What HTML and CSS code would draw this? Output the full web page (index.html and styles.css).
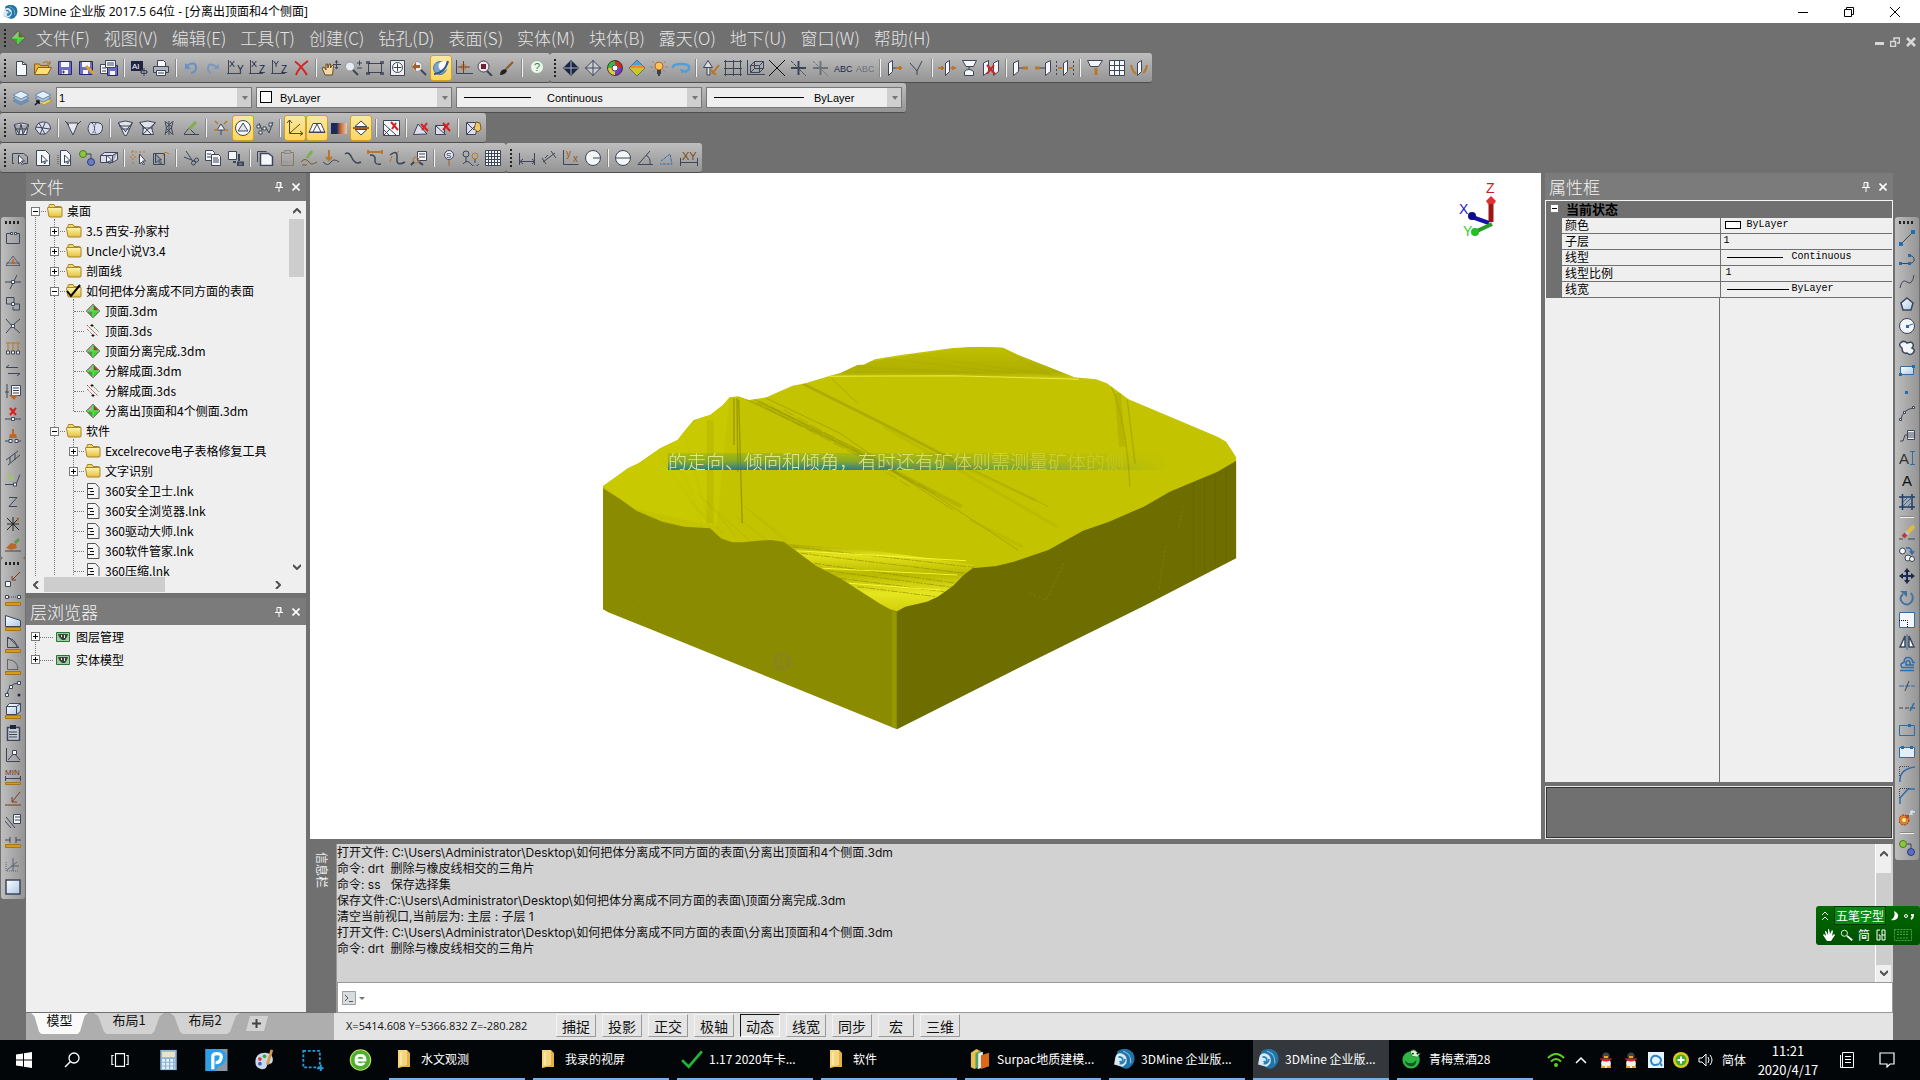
FILE: index.html
```html
<!DOCTYPE html>
<html lang="zh-CN">
<head>
  <meta charset="UTF-8">
  <meta name="viewport" content="width=device-width, initial-scale=1.0">
  <title>3DMine 企业版 2017.5 64位</title>
  <link rel="stylesheet" href="styles.css">
</head>
<body>
  <!-- shared symbols -->
  <svg class="defs">
    <linearGradient id="gold" x1="0" y1="0" x2="0" y2="1"><stop offset="0" stop-color="#fff6b0"/><stop offset="1" stop-color="#e5bf3c"/></linearGradient>
    <linearGradient id="sky" x1="0" y1="0" x2="1" y2="1"><stop offset="0" stop-color="#fff"/><stop offset="1" stop-color="#a9c8e8"/></linearGradient>
    <linearGradient id="heat"><stop offset="0" stop-color="#17285c"/><stop offset=".35" stop-color="#1a2a5a"/><stop offset=".6" stop-color="#c2683a"/><stop offset="1" stop-color="#efc9a8"/></linearGradient>
    <symbol id="folder" viewBox="0 0 16 14"><path d="M2 3.5V1.5q0-1 1-1h4l1 2h5.500q1 0 1 1v1" fill="#f3d86a" stroke="#a8842a"/><path d="M.5 4q0-.5.500-.5h11.500l2.500 0v8.500q0 1-1 1H3q-1 0-1.200-1z" fill="url(#gold)" stroke="#a8842a"/></symbol>
    <symbol id="dm" viewBox="0 0 14 14"><path d="M7 0l7 7-7 7-7-7z" fill="#8b6d5d" stroke="#555" stroke-width=".5"/><path d="M7 1v6H1z" fill="#a9b5a4"/><path d="M7 13V7h6z" fill="#3fd43a"/><path d="M7 1v6h6z" fill="#8b4a2e"/><path d="M7 13V7H1z" fill="#4f9a3f"/><path d="M7 1v12M1 7h12" stroke="#4be63f" stroke-width="1.500"/></symbol>
    <symbol id="ds" viewBox="0 0 14 14"><path d="M1 1l11 11" stroke="#c33" stroke-dasharray="2 1"/><path d="M1 5l7 7" stroke="#555" stroke-dasharray="1 1"/><path d="M6 1l7 7" stroke="#3a3" stroke-dasharray="2 1"/><path d="M6 0v3M4.500 1.500h3M7 10v3M5.500 11.500h3" stroke="#111"/></symbol>
    <symbol id="lnk" viewBox="0 0 14 16"><path d="M1.500 15.500V.5h8l3.500 4v11z" fill="#f4f4f4" stroke="#555"/><path d="M2 5.500h5M4 8.500h4M2 11.500h6" stroke="#111"/></symbol>
    <symbol id="eye" viewBox="0 0 14 10"><path d="M.5.5h13v9H.5z" fill="#a9c7a9" stroke="#1e7a2a"/><path d="M2 2h10l-1 3-2 3H6L3 5z" fill="#3a443a"/><path d="M5 3h1v2H5zM8 3h1v3H8z" fill="#dfe9df"/></symbol>
    <symbol id="pin" viewBox="0 0 8 10"><path d="M2 .5h4v5H2zM0 5.500h8M4 6v4M5.200 1v4" fill="none" stroke="#fff"/></symbol>
    <symbol id="x" viewBox="0 0 8 8"><path d="M.5.5l7 7M7.500.5l-7 7" stroke="#fff" stroke-width="1.600"/></symbol>
    <symbol id="logo" viewBox="0 0 20 18"><path d="M4 2q8-5 14 1 4 7-2 13-3 3-7 1l-7-3z" fill="#2274a8"/><path d="M2 8q1-5 6-4 6 2 4 9l-3 3-8-2z" fill="#d6ebf6"/><path d="M5 7q4 0 4 3-1 3-3 1M6 13q4 1 5-4" fill="none" stroke="#2b7fb4" stroke-width="1.500"/><path d="M9 2q8 2 7 11" fill="none" stroke="#82bddd"/></symbol>
    <symbol id="tfolder" viewBox="0 0 14 20"><path d="M1 1h9v16l-9 2z" fill="#f7d57a"/><path d="M10 1l3 3v14H1l9-2z" fill="#e3b04a"/><path d="M4 3v13" stroke="#fbe7a8" stroke-width="2"/></symbol>
    <symbol id="ql" viewBox="0 0 14 16"><circle cx="7" cy="4" r="3.600" fill="#444"/><path d="M3 16q-3-9 4-9 7 0 4 9z" fill="#f2f2f2"/><path d="M2 8q5 3 10 0l1-2q-6 2-12 0z" fill="#d3202a"/><path d="M2 15h4M8 15h4M5 5h4" stroke="#f0a01e" stroke-width="2"/></symbol>
  </svg>

  <header class="titlebar">
    <svg class="logo"><use href="#logo"/></svg>
    <h1>3DMine 企业版 2017.5 64位 - [分离出顶面和4个侧面]</h1>
    <div class="winbtns">
      <button aria-label="Minimize"><svg viewBox="0 0 12 12"><path d="M1 6.500h10"/></svg></button>
      <button aria-label="Restore"><svg viewBox="0 0 12 12"><path d="M1.500 3.500h7v7h-7zM3.500 3V1.500h7v7H9"/></svg></button>
      <button aria-label="Close"><svg viewBox="0 0 12 12"><path d="M1 1l10 10M11 1L1 11"/></svg></button>
    </div>
  </header>

  <nav class="menubar">
    <i class="grip"></i>
    <svg class="doc"><use href="#dm"/></svg>
    <a href="#">文件(F)</a><a href="#">视图(V)</a><a href="#">编辑(E)</a><a href="#">工具(T)</a><a href="#">创建(C)</a><a href="#">钻孔(D)</a><a href="#">表面(S)</a><a href="#">实体(M)</a><a href="#">块体(B)</a><a href="#">露天(O)</a><a href="#">地下(U)</a><a href="#">窗口(W)</a><a href="#">帮助(H)</a>
    <div class="mdibtns">
      <button aria-label="Minimize"><svg viewBox="0 0 10 10"><path d="M1 6.500h9" stroke-width="3"/></svg></button>
      <button aria-label="Restore"><svg viewBox="0 0 10 10"><path d="M.5 4.500h5v5h-5zM4 3.500V1h5.500v5H7" stroke-width="1.500"/></svg></button>
      <button aria-label="Close"><svg viewBox="0 0 10 10"><path d="M1 1l8 8M9 1L1 9" stroke-width="2.500"/></svg></button>
    </div>
  </nav>

  <section class="toolbars">
    <div class="row">
      <div class="bar">
        <i class="grip"></i>
        <button><svg viewBox="0 0 20 16"><path class="w" d="M5.500 1.500h6l4 3v11h-10z"/><path d="M11.500 1.500v3h4"/></svg></button>
        <button><svg viewBox="0 0 20 16"><path fill="#e8b23a" stroke="#8a5f14" d="M1.500 14V4h5l1 1.500h8V8"/><path fill="#ffdf7a" stroke="#8a5f14" d="M1.500 14.500L5 7.500h13.500l-4 7z"/><path stroke="#b06a10" d="M10 3q4-3 7 1m0-3v3h-3"/></svg></button>
        <button><svg viewBox="0 0 20 16"><path fill="#6e6ec0" stroke="#26266e" d="M3.500 1.500h13v13h-13z"/><path class="w" stroke="none" d="M6 2h8v5H6z"/><path class="w" stroke="none" d="M7 10h6v4H7z"/><path fill="#26266e" d="M8 11h1v2H8z"/></svg></button>
        <button><svg viewBox="0 0 20 16"><path fill="#6e6ec0" stroke="#26266e" d="M2.500 1.500h13v13h-13z"/><path class="w" stroke="none" d="M5 2h8v5H5z"/><path class="w" stroke="none" d="M6 10h5v4H6z"/><path stroke="#dca030" stroke-width="3" d="M9 6l8 8"/></svg></button>
        <button><svg viewBox="0 0 20 16"><path class="w" d="M1.500 4.500h8v9h-8z"/><path fill="#6e6ec0" stroke="#26266e" d="M8.500 5.500h10v10h-10z"/><path class="w" d="M6.500.5h10v7h-10z"/><path d="M8 3h7M8 5h7M3 8h4M3 11h4"/><path class="w" stroke="none" d="M11 11h5v4h-5z"/></svg></button>
        <i class="sep"></i>
        <button><svg viewBox="0 0 20 16"><path class="fd" d="M2 1h12v10H2z"/><text x="3" y="9" class="t" fill="#fff" font-size="8">AI</text><path class="w" d="M11 12h8M15 8v8M12.500 10.500h5v3h-5z"/></svg></button>
        <button><svg viewBox="0 0 20 16"><path class="w" d="M6.500.5h6l2 2v4h-8z"/><path fill="#aeb4c2" d="M2.500 6.500h15v6h-15z"/><path class="w" d="M5.500 10.500h9v5h-9z"/><path d="M7 13h6"/></svg></button>
        <i class="sep"></i>
        <button><svg viewBox="0 0 20 16"><path stroke="#6b8fc4" stroke-width="2" d="M5 6q10-6 10 2 0 4-5 5"/><path fill="#6b8fc4" stroke="none" d="M4 3v6h6z"/></svg></button>
        <button><svg viewBox="0 0 20 16"><path stroke="#7d98bd" stroke-width="2" d="M14 7q-9-6-9 2 0 3 3 4"/><path fill="#7d98bd" stroke="none" d="M16 4v5h-6z"/></svg></button>
        <button><svg viewBox="0 0 20 16"><path d="M3.500 0v13.500M2 13.500h14"/><text class="t" x="4" y="7" font-size="9">X</text><text class="t" x="12" y="13" font-size="10">Y</text></svg></button>
        <button><svg viewBox="0 0 20 16"><path d="M3.500 0v13.500M2 13.500h14"/><text class="t" x="4" y="7" font-size="9">X</text><text class="t" x="12" y="13" font-size="10">Z</text></svg></button>
        <button><svg viewBox="0 0 20 16"><path d="M3.500 0v13.500M2 13.500h14"/><text class="t" x="4" y="7" font-size="9">Y</text><text class="t" x="12" y="13" font-size="10">Z</text></svg></button>
        <button><svg viewBox="0 0 20 16"><path class="r" d="M4 1.500q6 4 12 13.500M17 1Q8 7 5 15"/></svg></button>
        <i class="sep"></i>
        <button><svg viewBox="0 0 20 16"><path fill="#f0d9a6" stroke="#6b4a1c" d="M4 15l-3-7 2-1 2 3V4l1.500 0 .5 4 1-4h1.500v4l2-3 1 1-1 9z"/><path d="M15.500 1v8M12 4.500h8M14 2.500l1.500-2 1.500 2M14 7l1.500 2L17 7"/></svg></button>
        <button><svg viewBox="0 0 20 16"><circle cx="7" cy="6.500" r="4.500" fill="#e6ecf2" stroke="#999"/><path d="M10 10l5 5" stroke-width="2"/><path d="M14 3h5M16.500.5v5M14 8h5"/></svg></button>
        <button><svg viewBox="0 0 20 16"><path d="M3.500 3.500h13v9h-13z"/><path class="fd" d="M1 1h4v3H1zM15 1h4v3h-4zM1 12h4v3H1zM15 12h4v3h-4z" opacity=".6"/></svg></button>
        <button><svg viewBox="0 0 20 16"><path fill="#eee" d="M3.500.5h14v15h-14z"/><circle cx="10.500" cy="7.500" r="5" fill="#fff"/><path d="M10.500 3.500v8M6.500 7.500h8"/></svg></button>
        <button><svg viewBox="0 0 20 16"><circle cx="8" cy="6.500" r="5" fill="#e8ecf2" stroke="#999"/><path fill="#a0602a" stroke="none" d="M3 7l4-5v3h4v3H7v3z"/><path d="M12 10l5 5" stroke-width="2"/></svg></button>
        <button class="on"><svg viewBox="0 0 20 16"><circle cx="9" cy="8" r="6.500" fill="#7fa3cf" stroke="#54749e"/><circle cx="12" cy="6" r="4.500" fill="#fff" stroke="none"/><path stroke="#31588c" stroke-width="2" d="M3 14Q14 13 17 1"/></svg></button>
        <button><svg viewBox="0 0 20 16"><path d="M3.500 0v13.500H20"/><circle cx="10.500" cy="7" r="2.500" class="o"/><path stroke="#8b3a1a" d="M10.500 1v12M5 7h12"/></svg></button>
        <button><svg viewBox="0 0 20 16"><circle cx="8.500" cy="6.500" r="5.500" fill="#f2e4e8"/><path fill="#6b2434" stroke="none" d="M6 4h5v5H6z"/><path d="M12 11l5 5" stroke-width="2"/></svg></button>
        <button><svg viewBox="0 0 20 16"><path fill="#222" stroke="none" d="M3 15q0-6 6-6l1 2q-2 4-7 4z"/><path stroke="#8b5c2c" stroke-width="2" d="M9 9l7-7"/></svg></button>
        <i class="sep"></i>
        <button><svg viewBox="0 0 20 16"><circle cx="10" cy="7" r="6.500" fill="#eef5ee" stroke="#9ab09a"/><text x="7" y="11" font-size="11" class="t" fill="#2b8a3a">?</text></svg></button>
      </div>
      <div class="bar">
        <i class="grip"></i>
        <button><svg viewBox="0 0 20 16"><path class="fd" d="M10 0l8 8-8 8-8-8z"/><path d="M10 1v14M3 8h14" stroke="#aab4c4"/></svg></button>
        <button><svg viewBox="0 0 20 16"><path fill="#c8ccd0" d="M10 .5l7.500 7.500-7.500 7.500L2.500 8zM10 0v16M2 8h16"/></svg></button>
        <button><svg viewBox="0 0 20 16"><path stroke="#d22" stroke-width="4" d="M15.500 8A5.500 5.500 0 0 0 10 2.500"/><path stroke="#3b3" stroke-width="4" d="M10 2.500A5.500 5.500 0 0 0 4.500 8"/><path stroke="#dc3" stroke-width="4" d="M4.500 8a5.500 5.500 0 0 0 5.500 5.500"/><path stroke="#73c" stroke-width="4" d="M10 13.500A5.500 5.500 0 0 0 15.500 8"/><circle cx="10" cy="8" r="7.500" stroke="#222" stroke-width=".8"/><circle cx="10" cy="8" r="3" class="w"/></svg></button>
        <button><svg viewBox="0 0 20 16"><path fill="#4aa3e0" stroke="none" d="M10 0l5.500 5.500h-11z"/><path fill="#f08a2a" stroke="none" d="M4.500 5.500h11L18 8H2z"/><path fill="#c8c82a" stroke="none" d="M2 8h16l-8 8z"/><path stroke-width=".6" d="M10 0l8 8-8 8-8-8z"/></svg></button>
        <button><svg viewBox="0 0 20 16"><circle cx="10" cy="6" r="4" fill="#ffc35a" stroke="#b5651d"/><path d="M8 11h4M8 13h4M9 15h2" stroke="#222" stroke-width="1.500"/><path stroke="#8a8a8a" d="M3 1l2 2M17 1l-2 2M1 7h3M16 7h3M4 12l2-2M16 12l-2-2"/></svg></button>
        <button><svg viewBox="0 0 20 16"><path stroke="#4a9fdc" stroke-width="2.500" d="M2 8q-1-4 8-4t8 4q0 3-5 4"/><path fill="#4a9fdc" stroke="none" d="M9 9l5 1-3 4z"/></svg></button>
        <i class="sep"></i>
        <button><svg viewBox="0 0 20 16"><path fill="#d8dce4" d="M7 .5l4.500 7h-9zM6 8v7h3V8"/><path class="o" stroke-width="2" d="M11 14l7-9M9 9l6 6"/></svg></button>
        <button><svg viewBox="0 0 20 16"><path d="M2.500 0v16M10.500 0v16M17.500 0v16M1 1.500h18M1 8.500h18M1 14.500h18"/></svg></button>
        <button><svg viewBox="0 0 20 16"><path d="M2.500 0v14.500H20M5.500 5.500h9v7h-9zM5.500 5.500l4-4h9l-4 4M18.500 1.500v7l-4 4M9.500 1.500v7h9M5.500 12.500l4-4"/></svg></button>
        <button><svg viewBox="0 0 20 16"><path stroke="#111" d="M2 0l16 16M18 0L2 16"/></svg></button>
        <button><svg viewBox="0 0 20 16"><path d="M9.500 1v14M2 8h15" stroke-width="2"/><path d="M2 1l7 7 8 8" stroke-dasharray="3 1"/></svg></button>
        <button><svg viewBox="0 0 20 16" opacity=".55"><path d="M9.500 1v14M2 8h15" stroke-width="2"/><path d="M2 1l7 7 8 8" stroke-dasharray="3 1"/></svg></button>
        <button><svg viewBox="0 0 20 16"><text class="t" x="1" y="12" font-size="9" stroke-width=".3">ABC</text></svg></button>
        <button><svg viewBox="0 0 20 16" opacity=".45"><text class="t" x="1" y="12" font-size="9">ABC</text></svg></button>
        <i class="sep"></i>
        <button><svg viewBox="0 0 20 16"><path class="w" d="M3.500 3l4-2.500v11l-4 4z"/><path class="o" stroke-width="2" d="M11 8h6M15 6v4"/><path d="M8 8h3"/></svg></button>
        <button><svg viewBox="0 0 20 16"><path d="M3 3l7 8M15 1l-5 10v4"/></svg></button>
        <i class="sep"></i>
        <button><svg viewBox="0 0 20 16"><path class="w" d="M8.500 3l4-2.500v11l-4 4z"/><path class="o" stroke-width="2" d="M1 8h6M14 8h5M5 6v4M16 6v4"/></svg></button>
        <button><svg viewBox="0 0 20 16"><path class="w" d="M3.500.5h14l-3 6H7z"/><path class="w" d="M5.500 15.500v-4q4-4 9 0v4z"/><path d="M10 7v3"/></svg></button>
        <button><svg viewBox="0 0 20 16"><path class="w" d="M2.500 3l5-2.500v11l-5 4zM12.500 3l5-2.500v11l-5 4z"/><path class="r" d="M6 5l8 9M13 5l-7 9"/></svg></button>
        <i class="sep"></i>
        <button><svg viewBox="0 0 20 16"><path class="w" d="M2.500 3l5-2.500v11l-5 4z"/><path class="o" stroke-width="3" d="M12 8h5"/><path d="M8 8h4"/></svg></button>
        <button><svg viewBox="0 0 20 16"><path class="w" d="M12.500 3l5-2.500v11l-5 4z"/><path class="o" stroke-width="3" d="M2 8h5"/><path d="M7 8h5"/></svg></button>
        <button><svg viewBox="0 0 20 16"><path class="w" d="M8.500 3l4-2.500v11l-4 4z"/><path class="o" stroke-width="2" d="M3 8h4M14 8h4"/><path stroke-dasharray="2 2" d="M1.500 1v14M18.500 1v14"/></svg></button>
        <i class="sep"></i>
        <button><svg viewBox="0 0 20 16"><path class="w" d="M2.500.5h15l-4 6h-8z"/><path class="o" stroke-width="3" d="M11 8v7"/></svg></button>
        <button><svg viewBox="0 0 20 16"><path class="w" d="M2.500.5h15v15h-15zM7.500 0v16M12.500 0v16M2 5.500h16M2 10.500h16"/></svg></button>
        <button><svg viewBox="0 0 20 16"><path class="w" d="M8.500 3l4-2.500v11l-4 4z"/><path class="o" stroke-width="2" d="M2 5q1 6 5 9M18 5q-1 6-4 8"/></svg></button>
      </div>
    </div>

    <div class="row">
      <div class="bar">
        <i class="grip"></i>
        <button><svg viewBox="0 0 20 16"><path fill="#7193b5" d="M10 7l8 4-8 4-8-4z" stroke="#6c89a6"/><path fill="#a8c3dc" d="M10 4l8 4-8 4-8-4z" stroke="#6c89a6"/><path fill="#e3eef8" d="M10 1l8 4-8 4-8-4z" stroke="#6c89a6"/></svg></button>
        <button><svg viewBox="0 0 20 16"><path fill="#e8d36a" d="M11 7l8 4-8 4-8-4z" stroke="#b0982a"/><path fill="#a8c3dc" d="M10 4l8 4-8 4-8-4z" stroke="#6c89a6"/><path fill="#e3eef8" d="M10 1l8 4-8 4-8-4z" stroke="#6c89a6"/><path stroke="#113" stroke-width="1.500" d="M2 15l4-4M3 11h3v3"/></svg></button>
        <div class="combos">
          <label class="combo"><select aria-label="Layer"><option>1</option></select></label>
          <label class="combo color"><i class="swatch"></i><select aria-label="Color"><option>ByLayer</option></select></label>
          <label class="combo ltype"><i class="line"></i><select aria-label="Linetype"><option>Continuous</option></select></label>
          <label class="combo lwidth"><i class="line"></i><select aria-label="Lineweight"><option>ByLayer</option></select></label>
        </div>
      </div>
    </div>

    <div class="row">
      <div class="bar thin">
        <i class="grip"></i>
        <button><svg viewBox="0 0 20 16"><path fill="#dde" d="M3.500 4.500q7-3 14 0l-2 10h-10zM3 5l5 9 2-10 2 10 5-9M4 9h12"/></svg></button>
        <button><svg viewBox="0 0 20 16"><path fill="#dde" d="M2.500 9q1-7 8-7t7 7l-5 5h-6zM6 3l6 11M12 3L7 14M3 7l14 2"/></svg></button>
        <i class="sep"></i>
        <button><svg viewBox="0 0 20 16"><path fill="#e6e9ee" d="M4 3h11l-5 12zM2 1l4 4M18 1l-4 4"/></svg></button>
        <button><svg viewBox="0 0 20 16"><path fill="#dde" d="M5.500 2.500h5q8 0 7 6t-7 6h-5q-5-6 0-12z"/><path d="M7 3q5 5 0 11M11 3q-3 5 0 11" stroke-dasharray="2 1"/></svg></button>
        <i class="sep"></i>
        <button><svg viewBox="0 0 20 16"><path fill="#e0e4ea" d="M3.500 2.500q7-3 14 0l-6 13h-2zM3 3l8 9M17 3l-7 9M4 6h12M6 9h9"/></svg></button>
        <button><svg viewBox="0 0 20 16"><path fill="#e0e4ea" d="M2.500 2.500q8-3 16 0l-4 5 2 7h-11l1-7z"/><path d="M3 3l11 11M18 3L6 14M5 8h11"/></svg></button>
        <button><svg viewBox="0 0 20 16"><path d="M6 1q3 7 0 14M14 1q-3 7 0 14M10 1v14M7 2l6 5-6 6M13 2L7 8l6 6"/></svg></button>
        <button><svg viewBox="0 0 20 16"><path d="M3 14.500h15M3 14l5-6 6 6"/><path stroke="#7fae4c" stroke-width="3" d="M8 9l7-7"/></svg></button>
        <i class="sep"></i>
        <button><svg viewBox="0 0 20 16"><path fill="#eee" d="M10 4l4 6H6zM10 10v5"/><path class="o" stroke-width="1.500" d="M4 1l3 3M16 1l-3 3M3 10h4M13 10h4"/></svg></button>
        <button class="on"><svg viewBox="0 0 20 16"><circle cx="10" cy="8" r="7.500" fill="#fff"/><path fill="#dfe7f2" d="M10 3l5 8H5z"/></svg></button>
        <button><svg viewBox="0 0 20 16"><path d="M4 3l3 7 4-2 3 5 4-11"/><path class="w" d="M2 5h3v3H2zM8 7h3v3H8zM14 3h3v3h-3zM4 11h3v3H4z"/></svg></button>
        <i class="sep"></i>
        <button class="on"><svg viewBox="0 0 20 16"><path d="M4.500 0v13.500H18M5 13l10-9M2 3l2.500-3L7 3M15 11l3 2.500-3 2" stroke="#5a4a22"/></svg></button>
        <button class="on"><svg viewBox="0 0 20 16"><path fill="#fff" d="M6 3.500h8l4 9H2z"/><path d="M10 4l-4 8M10 4l4 8M2 12h16"/></svg></button>
        <button><svg viewBox="0 0 20 16"><path fill="url(#heat)" stroke="none" d="M2 3h16v11H2z"/></svg></button>
        <button class="on"><svg viewBox="0 0 20 16"><path fill="#fff" d="M10 1l6 5.500H4zM10 15l6-5.500H4z"/><path stroke="#a2601c" stroke-width="2" d="M2 8h16"/></svg></button>
        <i class="sep"></i>
        <button><svg viewBox="0 0 20 16"><path class="w" d="M2.500.5h16v15h-16z"/><path d="M3 4l12 11M2 9l6 6M3 15l6-6"/><path class="r" d="M10 2l7 8M15 3l-4 6"/></svg></button>
        <i class="sep"></i>
        <button><svg viewBox="0 0 20 16"><path fill="#dde" d="M2.500 14.500L7 4l9 10z"/><path class="r" d="M10 4l7 7M16 3l-5 7"/></svg></button>
        <button><svg viewBox="0 0 20 16"><path fill="#dde" d="M2.500 5.500h9v9h-9zM3 6l10 9"/><path class="r" d="M10 3l7 8M16 3l-6 7"/></svg></button>
        <i class="sep"></i>
        <button><svg viewBox="0 0 20 16"><path fill="#dde" d="M3.500 2.500h12l-3 12h-9zM4 14L15 3M4 3l7 7"/><path fill="#f2c66c" stroke="#7a5a1a" d="M11 9l2-7 4 1 1 6-3 3z"/></svg></button>
      </div>
    </div>

    <div class="row">
      <div class="bar">
        <i class="grip"></i>
        <button><svg viewBox="0 0 20 16"><path d="M3 13.500H1.500v-10h11l4 3v7H13"/><path class="w" d="M7.500 5v9l2-2 2 3 1-1-2-3h3z"/></svg></button>
        <button><svg viewBox="0 0 20 16"><path class="w" d="M3.500.5h9l4 4v11h-13z"/><path class="w" d="M8.500 5v8l2-2 1 3 1-1-1-2h3z"/></svg></button>
        <button><svg viewBox="0 0 20 16"><path class="w" d="M5.500.5h6l4 4v11h-10z"/><path class="w" d="M9.500 5v8l2-2 1 3 1-1-1-2h3z"/><path stroke-dasharray="1 1" d="M3 5v10"/></svg></button>
        <button><svg viewBox="0 0 20 16"><circle cx="6" cy="4" r="3.500" fill="#8cc63f" stroke="#4a7a1a"/><circle cx="14" cy="12" r="3.500" fill="#6a7ec4" stroke="#2a3a7a"/><path d="M9 4h5v5"/></svg></button>
        <button><svg viewBox="0 0 20 16"><path fill="#dde" d="M1.500 5.500h12v7h-12zM1.500 5.500l4-3h13l-5 3M18.500 2.500v7l-5 3"/><path class="w" d="M7.500 5v8l2-2 1 3 1-1-1-2h3z"/></svg></button>
        <i class="sep"></i>
        <button><svg viewBox="0 0 20 16"><path stroke-dasharray="2 2" d="M2 2l14 0M4 0v14M1 7h10" class="o"/><path class="w" d="M10.500 4v10l2-2 2 3 1-1-2-3h3z"/></svg></button>
        <button><svg viewBox="0 0 20 16"><path d="M2.500 3.500h11v11h-11z"/><path class="o" d="M12 6q1-6 6-2"/><path fill="#8a9aaa" d="M4.500 4v9l2-2 3 3 1-1-3-3h3z"/></svg></button>
        <i class="sep"></i>
        <button><svg viewBox="0 0 20 16"><path d="M5 1l6 9M3 7l10 4"/><circle cx="12.500" cy="13" r="2"/><circle cx="15.500" cy="10" r="2"/></svg></button>
        <button><svg viewBox="0 0 20 16"><path class="w" d="M2.500.5h7l2 2v8h-9z"/><path class="w" d="M8.500 4.500h7l2 2v9h-9z"/><path d="M4 4h4M4 7h4M10 8h5M10 10h6M10 12h6"/></svg></button>
        <button><svg viewBox="0 0 20 16"><path class="w" d="M3.500 1.500h8v8h-8z"/><path d="M8 12h3M14 4v7M13 12.500h5v3h-5z" stroke-width="2"/></svg></button>
        <i class="sep"></i>
        <button><svg viewBox="0 0 20 16"><path d="M2.500 12V1.500h9"/><path class="w" d="M5.500 3.500h8l4 3v9h-12z" stroke-width="1.500"/></svg></button>
        <button><svg viewBox="0 0 20 16"><path stroke="#8a7a5a" d="M4.500 2.500h12v13h-12z"/><path fill="#aaa" stroke="#888" d="M7.500.5h6v3h-6z"/><path stroke="#888" stroke-dasharray="1 1" d="M6 12h9"/></svg></button>
        <button><svg viewBox="0 0 20 16"><path stroke="#7fae4c" stroke-width="3" d="M8 8l5-7"/><path stroke="#7a5a2a" d="M2 12q4-5 8 0 2 4 8 0M3 15h5"/></svg></button>
        <button><svg viewBox="0 0 20 16"><path class="o" stroke-width="2" d="M8 0v9M5 7l3 3 3-3"/><path d="M2 12q5 5 8 0 3-4 8 0"/></svg></button>
        <button><svg viewBox="0 0 20 16"><path stroke-width="1.500" d="M2 4q4-3 7 4t9 4"/></svg></button>
        <button><svg viewBox="0 0 20 16"><path class="o" stroke-width="2" d="M3 2h14M3 0v4M17 0v4"/><path stroke-width="1.500" d="M5 5q6 0 5 5t6 4"/></svg></button>
        <button><svg viewBox="0 0 20 16"><path stroke-width="1.500" d="M3 5q8-6 7 3t8 4"/><path class="o" d="M5 6l-2 6M10 3l2-2"/></svg></button>
        <button><svg viewBox="0 0 20 16"><path class="w" d="M8.500 1.500h9v9h-9z"/><path d="M10 4h6M10 7h6"/><circle cx="7" cy="10" r="3" class="o"/><path stroke-width="2" d="M5 12l-3 3M10 12l4 3"/></svg></button>
        <i class="sep"></i>
        <button><svg viewBox="0 0 20 16"><circle cx="10" cy="5" r="4.500" fill="#e8ecf2"/><text class="t" x="7" y="8" font-size="8">S</text><path stroke="#a2601c" d="M10 10v6"/></svg></button>
        <button><svg viewBox="0 0 20 16"><circle cx="5" cy="4" r="3"/><circle cx="14" cy="6" r="3" class="o"/><path d="M2 14q4-5 8 0t8 0M5 7v5M14 9v4"/></svg></button>
        <button><svg viewBox="0 0 20 16"><path class="w" d="M2.500.5h15v15h-15zM5.500 0v16M8.500 0v16M11.500 0v16M14.500 0v16M2 3.500h16M2 6.500h16M2 9.500h16M2 12.500h16"/></svg></button>
      </div>
      <div class="bar">
        <i class="grip"></i>
        <button><svg viewBox="0 0 20 16"><path d="M2.500 3v12M17.500 3v12M3 11.500h15M6 9l-3 2.500L6 14M15 9l3 2.500-3 2.500"/></svg></button>
        <button><svg viewBox="0 0 20 16"><path d="M4 12l12-9M3 8l4 6M12 1l5 7M6 8l3-3"/></svg></button>
        <button><svg viewBox="0 0 20 16"><path d="M2.500 0v14.500h15"/><text class="t" x="5" y="7" font-size="10" fill="#9a5a14">y</text><text class="t" x="12" y="12" font-size="10" fill="#9a5a14">x</text></svg></button>
        <button><svg viewBox="0 0 20 16"><circle cx="10" cy="8" r="7.500" fill="#f4f6f8"/><path d="M10 8h7"/></svg></button>
        <i class="sep"></i>
        <button><svg viewBox="0 0 20 16"><circle cx="10" cy="8" r="7.500" fill="#f4f6f8"/><path d="M3 8h14"/></svg></button>
        <button><svg viewBox="0 0 20 16"><path d="M18 14.500H3L15 1M11 5q5 3 4 9"/></svg></button>
        <button><svg viewBox="0 0 20 16"><path class="bl" d="M4 11l9-7 2 10H3" stroke-dasharray="3 1"/></svg></button>
        <button><svg viewBox="0 0 20 16"><text class="t" x="3" y="10" font-size="11" fill="#7a4a14">XY</text><path d="M1.500 8v8M18.500 8v8M2 12.500h16"/></svg></button>
      </div>
    </div>
  </section>

  <main>
    <aside class="rail left">
      <div class="vbar">
        <i class="vgrip"></i>
        <button><svg viewBox="0 0 16 16"><path d="M5 3.500H1.500v10h13V3.500H11"/><path class="w" d="M5.500 2.500h2v2h-2zM9.500 2.500h2v2h-2z"/></svg></button>
        <button><svg viewBox="0 0 16 16"><path d="M1 13.500h14L8 4zM1 11h14" opacity=".7"/><path class="fo" d="M8 6l2 6H6z"/></svg></button>
        <button><svg viewBox="0 0 16 16"><path d="M0 8h16M12 1L5 15"/><path class="w" d="M6.500 6.500h3v3h-3z"/></svg></button>
        <button><svg viewBox="0 0 16 16"><path d="M7 8H1.500V1.500H9V6M9 8h5.500v6H8v-3"/><path class="w" d="M6.500 6.500h3v3h-3z"/></svg></button>
        <button><svg viewBox="0 0 16 16"><path d="M1 1q6 8 14 14M15 1Q8 6 1 15"/><path class="w" d="M6.500 6.500h3v3h-3z"/></svg></button>
        <button><svg viewBox="0 0 16 16"><path class="o" d="M3 2v9M8 2v9M13 2v9M1 3h14"/><path class="w" d="M1.500 11h3v3h-3zM6.500 11h3v3h-3zM11.500 11h3v3h-3z"/></svg></button>
        <button><svg viewBox="0 0 16 16"><path d="M1 5.500h12M3 11.500h12M4 3L1 5.500M12 14l3-2.500"/></svg></button>
        <button><svg viewBox="0 0 16 16"><path class="w" d="M6.500 1.500h9v10h-9z"/><path d="M8 4h6M8 6.500h6M8 9h6M2 0v14M0 8h4"/><path class="fo" d="M4 11h9l-4 5z"/></svg></button>
        <button><svg viewBox="0 0 16 16"><path class="r" d="M5 2l6 7M11 2L5 9"/><path d="M0 13h16"/><path class="w" d="M6.500 11.500h3v3h-3z"/></svg></button>
        <button><svg viewBox="0 0 16 16"><path class="fo" d="M7 1h2v5h2l1 4H4l1-4h2z"/><path d="M0 13h5M11 13h5"/><path class="w" d="M4 11.500h3v3H4zM10 11.500h3v3h-3z"/></svg></button>
        <button><svg viewBox="0 0 16 16"><path d="M1 10L13 1M3 15L15 5M5 7v6M10 4v6"/></svg></button>
        <button><svg viewBox="0 0 16 16"><path stroke="#a3bd7a" stroke-width="4" d="M3 2l5 6"/><path d="M0 12.500h11l4-10"/><path class="w" d="M8.500 11h3v3h-3z"/></svg></button>
        <button><svg viewBox="0 0 16 16"><path d="M4 3.500h8l-8 9h8"/></svg></button>
        <button><svg viewBox="0 0 16 16"><path stroke="#222" d="M2 2l12 12M14 2L2 14M8 1v14M2 8h12"/><path class="o" d="M11 2h2v4"/></svg></button>
        <button><svg viewBox="0 0 16 16"><path class="fo" d="M1 10l5-5 5 1 1 4-6 2z"/><path stroke="#5a9a4a" stroke-width="3" d="M10 5l4-4"/><path d="M0 13h16"/></svg></button>
      </div>
      <div class="vbar">
        <i class="vgrip"></i>
        <button><svg viewBox="0 0 16 16"><path class="w" d="M.5 10.500h5v5h-5z"/><path stroke="#7a3a1a" d="M15 1L7 9M7 5v4h4"/></svg></button>
        <button><svg viewBox="0 0 16 16"><path class="w" d="M.5 2.500h3v3h-3zM12.500 2.500h3v3h-3z"/><path stroke-dasharray="1 1" d="M4 4h8"/><path class="fg" d="M.5 9.500h15v3H.5z"/></svg></button>
        <button><svg viewBox="0 0 16 16"><path fill="url(#sky)" d="M.5.5l15 5v6H.5z"/><path class="fg" d="M.5 12.500h15v3H.5z"/></svg></button>
        <button><svg viewBox="0 0 16 16"><path d="M2.500 0v10.500H14L3 0M2 1q8 0 10 9"/><path class="fg" d="M.5 12.500h15v3H.5z"/></svg></button>
        <button><svg viewBox="0 0 16 16"><path d="M2.500 0v10.500H13q0-9-10-10" opacity=".7"/><path class="fg" d="M.5 12.500h15v3H.5z"/></svg></button>
        <button><svg viewBox="0 0 16 16"><path d="M2 13Q4 3 13 2"/><path class="w" d="M.5 12.500h3v3h-3zM4.500 4.500h3v3h-3zM12.500.5h3v3h-3z"/><circle cx="14" cy="14" r="1.500" class="fd"/></svg></button>
        <button><svg viewBox="0 0 16 16"><path fill="url(#sky)" d="M1.500 3.500l3-3h11v8l-4 3h-10zM1.500 3.500h10v8M11.500 3.500l4-3"/><path class="fg" d="M.5 12.500h15v3H.5z"/></svg></button>
        <button><svg viewBox="0 0 16 16"><path fill="#c8ccd4" d="M2.500 2.500h12v13h-12z" stroke-width="1.500"/><path class="fd" d="M5 0h6v4H5z"/><path d="M4 7h8M4 9.500h8M4 12h8"/></svg></button>
        <button><svg viewBox="0 0 16 16"><path d="M1.500 1v13.500H15M3 13l6-7 6 7"/><path class="w" d="M7.500 3.500h4v4h-4z"/></svg></button>
        <button><svg viewBox="0 0 16 16"><text class="t" x="0" y="6" font-size="8" fill="#7a3a1a">MIN</text><path d="M.5 7v5M15.500 7v5M1 9.500h14"/><path class="fg" d="M.5 13.500h15v2H.5z"/></svg></button>
        <button><svg viewBox="0 0 16 16"><path stroke="#7a3a1a" d="M15 1L7 11M7 6v5h5M0 14h16"/></svg></button>
        <button><svg viewBox="0 0 16 16"><path class="w" d="M8.500 1.500h7v9h-7z"/><path d="M10 4h5M10 7h5M1 4l9 11M0 8l6 7"/></svg></button>
        <button><svg viewBox="0 0 16 16"><path d="M0 5h5M11 5h5M5 2v6M11 2v6"/><path class="fg" d="M.5 9.500h15v3H.5z"/></svg></button>
        <button><svg viewBox="0 0 16 16" opacity=".7"><path stroke-dasharray="1 1" d="M1 5v9h12"/><path d="M2 13L12 5M8 1v13M6 9h8"/></svg></button>
        <button><svg viewBox="0 0 16 16"><path fill="url(#sky)" stroke-width="1.500" d="M1 1h14v14H1z"/></svg></button>
      </div>
    </aside>

    <div class="work">
      <div class="upper">
        <aside class="side">
          <section class="panel files">
            <header><h2>文件</h2><svg class="pin"><use href="#pin"/></svg><svg class="close"><use href="#x"/></svg></header>
            <div class="body scroller">
              <ul class="tree">
                <li><div class="node"><span class="twig"><button class="exp minus" aria-label="collapse"></button></span><svg><use href="#folder"/></svg>桌面</div>
                  <ul>
                    <li><div class="node"><span class="twig"><button class="exp" aria-label="expand"></button></span><svg><use href="#folder"/></svg>3.5 西安-孙家村</div></li>
                    <li><div class="node"><span class="twig"><button class="exp" aria-label="expand"></button></span><svg><use href="#folder"/></svg>Uncle小说V3.4</div></li>
                    <li><div class="node"><span class="twig"><button class="exp" aria-label="expand"></button></span><svg><use href="#folder"/></svg>剖面线</div></li>
                    <li><div class="node"><span class="twig"><button class="exp minus" aria-label="collapse"></button></span><svg viewBox="0 0 16 14"><use href="#folder"/><path d="M1 7l4 5L14 1" fill="none" stroke="#000" stroke-width="2"/></svg>如何把体分离成不同方面的表面</div>
                      <ul class="end">
                        <li><div class="node"><span class="twig"></span><svg><use href="#dm"/></svg>顶面.3dm</div></li>
                        <li><div class="node"><span class="twig"></span><svg><use href="#ds"/></svg>顶面.3ds</div></li>
                        <li><div class="node"><span class="twig"></span><svg><use href="#dm"/></svg>顶面分离完成.3dm</div></li>
                        <li><div class="node"><span class="twig"></span><svg><use href="#dm"/></svg>分解成面.3dm</div></li>
                        <li><div class="node"><span class="twig"></span><svg><use href="#ds"/></svg>分解成面.3ds</div></li>
                        <li><div class="node"><span class="twig"></span><svg><use href="#dm"/></svg>分离出顶面和4个侧面.3dm</div></li>
                      </ul>
                    </li>
                    <li><div class="node"><span class="twig"><button class="exp minus" aria-label="collapse"></button></span><svg><use href="#folder"/></svg>软件</div>
                      <ul>
                        <li><div class="node"><span class="twig"><button class="exp" aria-label="expand"></button></span><svg><use href="#folder"/></svg>Excelrecove电子表格修复工具</div></li>
                        <li><div class="node"><span class="twig"><button class="exp" aria-label="expand"></button></span><svg><use href="#folder"/></svg>文字识别</div></li>
                        <li><div class="node"><span class="twig"></span><svg class="tall"><use href="#lnk"/></svg>360安全卫士.lnk</div></li>
                        <li><div class="node"><span class="twig"></span><svg class="tall"><use href="#lnk"/></svg>360安全浏览器.lnk</div></li>
                        <li><div class="node"><span class="twig"></span><svg class="tall"><use href="#lnk"/></svg>360驱动大师.lnk</div></li>
                        <li><div class="node"><span class="twig"></span><svg class="tall"><use href="#lnk"/></svg>360软件管家.lnk</div></li>
                        <li><div class="node"><span class="twig"></span><svg class="tall"><use href="#lnk"/></svg>360压缩.lnk</div></li>
                      </ul>
                    </li>
                  </ul>
                </li>
              </ul>
              <div class="vscroll"><svg viewBox="0 0 8 6"><path d="M0 5l4-4 4 4"/></svg><i class="thumb"></i><svg viewBox="0 0 8 6"><path d="M0 1l4 4 4-4"/></svg></div>
              <div class="hscroll"><svg viewBox="0 0 6 8"><path d="M5 0L1 4l4 4"/></svg><i class="thumb"></i><svg viewBox="0 0 6 8"><path d="M1 0l4 4-4 4"/></svg></div>
            </div>
          </section>
          <section class="panel layers">
            <header><h2>层浏览器</h2><svg class="pin"><use href="#pin"/></svg><svg class="close"><use href="#x"/></svg></header>
            <div class="body">
              <ul class="tree wide">
                <li><div class="node"><span class="twig"><button class="exp" aria-label="expand"></button></span><svg><use href="#eye"/></svg>图层管理</div></li>
                <li><div class="node"><span class="twig"><button class="exp" aria-label="expand"></button></span><svg><use href="#eye"/></svg>实体模型</div></li>
              </ul>
            </div>
          </section>
        </aside>

        <div class="center">
          <div class="stage">
            <div class="viewport">
              <svg class="model" viewBox="0 0 1568 1290" preserveAspectRatio="none">
                <defs>
                  <clipPath id="topclip"><path d="M53 505L53 498 75 478 110 445 135 430 185 385 225 360 240 335 262 300 300 285 330 255 345 232 365 229 390 240 430 232 490 197 520 190 575 168 600 160 640 135 655 134 680 118 740 105 860 84 920 80 975 83 1010 105 1140 172 1190 178 1215 190 1265 238 1470 350 1490 365 1513 412 1513 600 731 1000 100 700Z"/></clipPath>
                  <linearGradient id="shine" x1="0" y1="0" x2="0" y2="1"><stop offset="0" stop-color="#a8a800"/><stop offset=".15" stop-color="#e2e21a"/><stop offset=".4" stop-color="#b9b900"/><stop offset=".65" stop-color="#e6e620"/><stop offset="1" stop-color="#c6c600"/></linearGradient>
                  <linearGradient id="rim" x1="0" y1="0" x2="0" y2="1"><stop offset="0" stop-color="#c0c000"/><stop offset=".8" stop-color="#aeae00"/><stop offset="1" stop-color="#d0d010"/></linearGradient>
                </defs>
                <g clip-path="url(#topclip)" fill="none">
                  <path d="M0 0H1568V1290H0z" fill="#c3c300"/>
                  <path d="M575 169L640 130 920 76 980 80 1150 178 860 166Z" fill="url(#rim)"/>
                  <path d="M575 169L860 167 1150 178" stroke="#eaea40" stroke-width="3"/>
                  <path d="M700 115l300 45M640 140l350 25M760 105l360 65M980 90l110 80" stroke="#9a9a00" opacity=".5"/>
                  <path d="M53 498L345 232l-30 390-200-60z" fill="#c9c900"/>
                  <path d="M200 390q60 100 80 230M180 400l120 220M240 340l60 280" stroke="#a5a500" opacity=".35"/>
                  <path d="M300 300v310" stroke="#b0b000" stroke-width="16" opacity=".4"/>
                  <path d="M355 235v140M362 235l2 220M366 240l8 370" stroke="#7c7c00" stroke-width="3" opacity=".6"/>
                  <path d="M410 245L660 410 880 560" stroke="#a8a800" stroke-width="12" opacity=".5"/>
                  <path d="M385 240L640 395 800 510 1010 690M400 238L660 400 860 570M430 235L600 340 700 430" stroke="#7c7c00" stroke-width="2" opacity=".5"/>
                  <path d="M395 242L660 420 760 500M440 260L700 440M470 270L820 520" stroke="#8c8c00" stroke-width="2" stroke-dasharray="30 8" opacity=".5"/>
                  <path d="M515 192L720 325 860 420" stroke="#a5a500" stroke-width="9" opacity=".5"/>
                  <path d="M515 192L720 325 860 420 1080 560M580 175L640 250" stroke="#8a8a00" stroke-width="2" opacity=".5"/>
                  <path d="M700 320L1100 620M850 420L1050 540M900 600l120 80" stroke="#aaaa00" stroke-width="8" opacity=".3"/>
                  <path d="M1225 200Q1260 300 1268 500M1262 240L1280 430" stroke="#8e8e00" stroke-width="3" opacity=".45"/>
                  <path d="M1240 220L1250 380" stroke="#aaaa00" stroke-width="14" opacity=".5"/>
                  <path d="M480 672L700 695 910 735 825 850 735 900 545 760Z" fill="url(#shine)"/>
                  <path d="M490 680L910 742M510 700l380 60M540 730l330 60M570 752l290 50M600 775l240 40M640 800l180 30" stroke="#8a8a00" stroke-width="3" stroke-dasharray="16 3 5 2" opacity=".6"/>
                  <path d="M500 692l390 30M560 745l310 20M620 790l210 20" stroke="#ffff3a" stroke-width="3" opacity=".8"/>
                  <path d="M250 540l80 100M270 520l120 140M380 560l100 110M360 590l80 80M290 540l70 110M400 580l80 80" stroke="#9b9b00" opacity=".6"/>
                </g>
                <path d="M53 505L90 535 130 572 190 605 240 620 300 625 325 655 350 667 375 667 410 662 440 660 470 665 490 685 545 738 600 775 690 850 715 868 731 874V1228L160 926 65 877 53 868Z" fill="#8b8b00"/>
                <path d="M731 874L750 860 800 845 825 830 860 798 885 765 905 745 960 738 1000 725 1080 690 1160 632 1220 605 1300 560 1360 515 1470 455 1513 422V715L1300 858 1040 1025 731 1228Z" fill="#6e6e00"/>
                <path d="M724 874V1222" stroke="#979700" stroke-width="10"/>
                <path d="M65 730L165 925M1115 730l-40 110-40-20M1390 560l-10 70M1350 680l-15 130" stroke="#7d8400" stroke-width="2" stroke-dasharray="6 6" fill="none"/>
                <path d="M1415 490V770M1440 475V760M1465 465V740M1490 445V730" stroke="#656500" stroke-width="2"/>
                <ellipse cx="465" cy="1025" rx="17" ry="22" fill="none" stroke="#8a7650" stroke-width="3"/>
                <path d="M465 1015v18" stroke="#8a7650" stroke-width="3"/>
              </svg>
              <div class="ticker"><span>的走向、倾向和倾角，有时还有矿体则需测量矿体的侧</span></div>
              <svg class="axes" viewBox="0 0 50 62">
                <path d="M36 44V22" stroke="#a01414" stroke-width="5"/><path d="M36 18l5 5-2 3h-6l-2-3z" fill="#e03030"/>
                <path d="M34 45L17 39" stroke="#1414a8" stroke-width="4"/><circle cx="17" cy="38" r="4" fill="#0c0c8c"/>
                <path d="M37 46L22 53" stroke="#2a9a2a" stroke-width="4"/><circle cx="20" cy="54" r="4" fill="#22c022"/>
                <text x="31" y="15" fill="#c82020">Z</text><text x="4" y="36" fill="#2020c0">X</text><text x="8" y="58" fill="#30d030">Y</text>
              </svg>
            </div>
            <aside class="panel props">
              <header><h2>属性框</h2><svg class="pin"><use href="#pin"/></svg><svg class="close"><use href="#x"/></svg></header>
              <div class="grid">
                <table>
                  <colgroup><col class="gutcol"><col class="namecol"><col></colgroup>
                  <thead><tr><th class="gut"><button class="exp minus" aria-label="collapse"></button></th><th colspan="2">当前状态</th></tr></thead>
                  <tbody>
                    <tr><td class="gut"></td><th>颜色</th><td><div class="val"><i class="swatch"></i>ByLayer</div></td></tr>
                    <tr><td class="gut"></td><th>子层</th><td><div class="val">1</div></td></tr>
                    <tr><td class="gut"></td><th>线型</th><td><div class="val"><i class="line"></i>Continuous</div></td></tr>
                    <tr><td class="gut"></td><th>线型比例</th><td><div class="val num">1</div></td></tr>
                    <tr><td class="gut"></td><th>线宽</th><td><div class="val"><i class="line long"></i>ByLayer</div></td></tr>
                  </tbody>
                </table>
                <div class="blank"></div>
              </div>
              <div class="desc"></div>
            </aside>
          </div>

          <section class="info">
            <h2>信息栏</h2>
            <div class="console">
              <div class="log">
                <div class="lines">
                  <p>打开文件: C:\Users\Administrator\Desktop\如何把体分离成不同方面的表面\分离出顶面和4个侧面.3dm</p>
                  <p>命令: drt&nbsp; 删除与橡皮线相交的三角片</p>
                  <p>命令: ss&nbsp;&nbsp; 保存选择集</p>
                  <p>保存文件:C:\Users\Administrator\Desktop\如何把体分离成不同方面的表面\顶面分离完成.3dm</p>
                  <p>清空当前视口,当前层为: 主层 : 子层 1</p>
                  <p>打开文件: C:\Users\Administrator\Desktop\如何把体分离成不同方面的表面\分离出顶面和4个侧面.3dm</p>
                  <p>命令: drt&nbsp; 删除与橡皮线相交的三角片</p>
                </div>
                <div class="vscroll"><svg viewBox="0 0 8 6"><path d="M0 5l4-4 4 4"/></svg><i class="thumb"></i><svg viewBox="0 0 8 6"><path d="M0 1l4 4 4-4"/></svg></div>
              </div>
              <label class="prompt">
                <svg viewBox="0 0 24 14"><path d="M.5.5h13v13H.5z" fill="#d8dcde" stroke="#9aa0a4"/><path d="M3 4l3 3-3 3M7 10.500h4" fill="none" stroke="#555"/><path d="M17 6h6l-3 3z" fill="#777"/></svg>
                <input type="text" aria-label="Command">
              </label>
            </div>
          </section>
        </div>
      </div>

      <div class="lower">
        <nav class="tabs">
          <button class="current">模型</button><button>布局1</button><button>布局2</button><button class="add" aria-label="add"><svg viewBox="0 0 9 9"><path d="M4.500 0v9M0 4.500h9"/></svg></button>
        </nav>
        <div class="status">
          <span class="coords">X=5414.608 Y=5366.832 Z=-280.282</span>
          <button>捕捉</button><button>投影</button><button>正交</button><button>极轴</button><button class="down">动态</button><button>线宽</button><button>同步</button><button class="one">宏</button><button>三维</button>
        </div>
      </div>
    </div>

    <aside class="rail right">
      <div class="vbar">
        <i class="vgrip"></i>
        <button><svg viewBox="0 0 16 16"><path d="M2 14L14 2"/><path class="fb" d="M0 12h4v4H0zM12 0h4v4h-4z"/></svg></button>
        <button><svg viewBox="0 0 16 16"><path d="M1 11.500h10q5-1 4-5-1-3-4-3"/><path class="fb" d="M0 10h3v3H0zM9 10h3v3H9zM9 2h3v3H9z"/></svg></button>
        <button><svg viewBox="0 0 16 16"><path d="M1 14Q3 4 8 8t7-7"/></svg></button>
        <button><svg viewBox="0 0 16 16"><path fill="url(#sky)" stroke-width="1.500" d="M8 2l6 5-2 7H4L2 7z"/></svg></button>
        <button><svg viewBox="0 0 16 16"><circle cx="8" cy="8" r="7.500" fill="#f2f6fa"/><path class="bl" d="M8 8l6-2"/><path class="fb" d="M7 7h3v3H7z"/></svg></button>
        <button><svg viewBox="0 0 16 16"><path fill="#f2f6fa" stroke-width="1.500" d="M3 8Q-1 5 2 2.500 5 0 8 3q5-2 6 1 1 2-1 4 4 2 1 5-3 3-6 0-5 1-5-5z"/></svg></button>
        <button><svg viewBox="0 0 16 16"><path fill="url(#sky)" class="bl" d="M1.500 4.500h13v8h-13z"/><path class="fb" d="M0 11h3v3H0zM13 3h3v3h-3z"/></svg></button>
        <button><svg viewBox="0 0 16 16"><path class="fb" d="M6 7h3v3H6z"/></svg></button>
        <button><svg viewBox="0 0 16 16"><path d="M2 14Q3 4 14 2"/><path class="w" d="M.5 12.500h2v2h-2zM4.500 5.500h2v2h-2zM13.500.5h2v2h-2z"/></svg></button>
        <button><svg viewBox="0 0 16 16"><path class="w" d="M8.500 2.500h7v9h-7z"/><path d="M9 5h6M9 7h6M9 9h6M1 13h3l2-6h2"/></svg></button>
        <button><svg viewBox="0 0 16 16"><text class="t" x="0" y="14" font-size="15" fill="#333">A</text><path class="bl" d="M13.500 2v12M11 1.500h5M11 14.500h5"/></svg></button>
        <button><svg viewBox="0 0 16 16"><text class="t" x="3" y="14" font-size="15" fill="#111">A</text></svg></button>
        <button><svg viewBox="0 0 16 16"><path stroke="#1f3c66" stroke-width="1.500" d="M3.500 0v16M13 0v16M0 3h16M0 13h16"/><path stroke="#2f6ca8" d="M4 8l5-5M4 12l9-9M8 13l5-5"/></svg></button>
        <i class="vsep"></i>
        <button><svg viewBox="0 0 16 16"><path stroke="#e3b93c" stroke-width="4" d="M15 2L8 9"/><path stroke="#b9c6da" stroke-width="4" d="M9 8l-2 2"/><path stroke="#c23b3b" stroke-width="4" d="M7 10l-3 3"/><path d="M0 15h4M9 15h7"/></svg></button>
        <button><svg viewBox="0 0 16 16"><circle cx="3.500" cy="5" r="3" fill="#f2f6fa"/><circle cx="9" cy="12" r="3" fill="#f2f6fa"/><circle cx="13" cy="13" r="2.500" fill="#f2f6fa"/><path class="bl" stroke-width="1.500" d="M7 2q6-1 6 5M11 5l2 3 2-3"/></svg></button>
        <button><svg viewBox="0 0 16 16"><path stroke-width="2" stroke="#1b2a5c" d="M8 2v12M2 8h12"/><path class="fd" d="M8 0l3 4H5zM8 16l3-4H5zM0 8l4-3v6zM16 8l-4-3v6z"/></svg></button>
        <button><svg viewBox="0 0 16 16"><path stroke="#44719f" stroke-width="2" d="M4 4Q-1 9 4 13t9-2q2-4-1-8"/><path fill="#44719f" stroke="none" d="M1 1h7v6z"/></svg></button>
        <button><svg viewBox="0 0 16 16"><path fill="#f2f6fa" class="bl" d="M.5.5h15v15H.5z"/><path stroke="#111" stroke-dasharray="1 1" d="M0 8.500h8.500V16"/></svg></button>
        <button><svg viewBox="0 0 16 16"><path fill="#fff" stroke-width="1.500" d="M6 2v11H1zM10 2v11h5z"/><path class="bl" d="M8 0v16"/></svg></button>
        <button><svg viewBox="0 0 16 16"><path class="bl" stroke-width="1.500" d="M1 14.500h14M15 11.500H3q-3-4 2-5 0-5 4-5t5 5h2M15 9H7V6q2-3 4 0v3"/></svg></button>
        <button><svg viewBox="0 0 16 16"><path class="bl" stroke-dasharray="5 1" d="M0 8h16"/><path d="M10 3L6 13"/></svg></button>
        <button><svg viewBox="0 0 16 16"><path d="M0 8h11" stroke-dasharray="4 2"/><path class="bl" stroke-width="1.500" d="M15 3l-4 8M11 8h5"/></svg></button>
        <button><svg viewBox="0 0 16 16"><path class="bl" d="M.5 3.500h15v10H.5z"/><path class="fb" d="M9 2h3v3H9z"/></svg></button>
        <button><svg viewBox="0 0 16 16"><path class="bl" fill="#e4eef8" d="M.5 3.500h15v10H.5z"/><path class="fb" d="M2 2h3v3H2zM11 2h3v3h-3z"/></svg></button>
        <button><svg viewBox="0 0 16 16"><path class="bl" stroke-width="1.500" d="M1 16Q0 3 16 1"/><path stroke-dasharray="1 1" d="M.5 10V.5H10"/></svg></button>
        <button><svg viewBox="0 0 16 16"><path class="bl" stroke-width="1.500" d="M1 16v-6L9 1h7"/><path stroke-dasharray="1 1" d="M.5 10V.5H10"/></svg></button>
        <button><svg viewBox="0 0 16 16"><circle cx="5" cy="10" r="5" fill="#d9822a" stroke="#9a2a1a" stroke-dasharray="2 1"/><circle cx="5" cy="10" r="2" fill="#ffe48a" stroke="none"/><path stroke="#c23b2b" stroke-width="2" d="M7 8l3-3"/><path stroke="#cfe3f4" stroke-width="1.500" d="M10 5l4-3M13 0v5M11 2h5"/></svg></button>
        <i class="vsep"></i>
        <button><svg viewBox="0 0 16 16"><circle cx="4" cy="4" r="3.500" fill="#8cc63f" stroke="#4a7a1a"/><circle cx="12" cy="12" r="3.500" fill="#5a6ec4" stroke="#2a3a7a"/><path d="M8 4h4v5"/></svg></button>
      </div>
    </aside>
  </main>

  <div class="ime">
    <div class="line1"><svg viewBox="0 0 8 10"><path d="M1 4l3-3 3 3M1 9l3-3 3 3"/></svg><span>五笔字型</span><svg viewBox="0 0 8 10"><path class="solid" d="M3 0q5 2 4 6-2 4-7 3 5-3 3-9z"/></svg><svg viewBox="0 0 10 8"><circle cx="2" cy="4" r="1.500"/><path d="M7 3h2q0 3-2 4" stroke-width="2"/></svg></div>
    <div class="line2"><svg viewBox="0 0 12 12"><path class="solid" d="M4 12L0 6l1-1 2 2-1-5h1l2 4V0h1l1 5 2-4 1 1-1 5 2-2 1 1-4 6z"/></svg><svg viewBox="0 0 16 12"><circle cx="5" cy="4" r="3.500"/><path d="M8 7l6 5" stroke-width="2"/></svg><b>简</b><svg class="gb" viewBox="0 0 10 12"><path d="M4 1H1v10h3V6H2.500M6 1h3v10H6zM6 6h3"/></svg><svg class="kbd" viewBox="0 0 18 12"><path d="M.5.5h17v11H.5zM3 3h12M3 5.500h12M3 9h12" stroke-dasharray="2 1"/></svg></div>
  </div>

  <footer class="taskbar">
    <div class="launch">
      <button aria-label="Start"><svg viewBox="0 0 16 16"><path fill="#fff" d="M0 2.500l7-1v6H0zM8 1.300L16 0v7.500H8zM0 8.500h7v6l-7-1zM8 8.500h8V16l-8-1.300z"/></svg></button>
      <button aria-label="Search"><svg viewBox="0 0 16 16"><circle cx="10" cy="6" r="5" fill="none" stroke="#fff" stroke-width="1.300"/><path d="M6.500 9.500L1 15" stroke="#fff" stroke-width="1.500"/></svg></button>
      <button aria-label="Task view"><svg viewBox="0 0 20 16"><path fill="none" stroke="#fff" stroke-width="1.300" d="M5 1h10v14H5zM3 3H1v10h2M17 3h2v10h-2"/></svg></button>
      <button aria-label="Calculator"><svg class="big" viewBox="0 0 24 24"><path fill="#8fb4d2" d="M3 1h18v22H3z"/><path fill="#e9e4c4" d="M5 3h14v6H5z"/><path stroke="#e4f0fa" stroke-width="3" stroke-dasharray="3 1.500" d="M5 12.500h14M5 16.500h14M5 20.500h14"/></svg></button>
      <button aria-label="P"><svg class="big" viewBox="0 0 24 24"><path fill="#8b98a4" d="M0 0h24v24H0z"/><path fill="#2ba0ea" d="M0 0h14q10 2 9 10-2 8-9 9l-3 5H0z"/><path fill="none" stroke="#fff" stroke-width="3.500" d="M8 22V8q0-3 5-3t4 5q-1 5-6 5"/></svg></button>
      <button aria-label="Paint"><svg class="big" viewBox="0 0 24 24"><path fill="#c9d9ea" d="M2 14Q2 4 13 4q9 1 8 9-1 4-6 3 0 6-6 6-7-1-7-8z"/><circle cx="7" cy="11" r="2" fill="#d33"/><circle cx="12" cy="8" r="2" fill="#3a3"/><circle cx="7" cy="16" r="2" fill="#36c"/><path stroke="#d89a4a" stroke-width="3" d="M20 1l-5 16"/></svg></button>
      <button aria-label="Snip"><svg class="big" viewBox="0 0 24 24"><path fill="none" stroke="#1f9fe0" stroke-width="2" stroke-dasharray="3 2" d="M2 2h18v18H2z"/><path stroke="#1f9fe0" stroke-width="2" d="M21 17v7M17 21h7"/></svg></button>
      <button aria-label="Browser"><svg class="big" viewBox="0 0 24 24"><circle cx="12" cy="12" r="10.500" fill="#4bb02f"/><path fill="none" stroke="#fff" stroke-width="3" d="M7 12h10q0-5-5-5t-5 5 5 5q3 0 4-2"/><circle cx="12" cy="12" r="11" fill="none" stroke="#b7e05a" stroke-width="1.500"/></svg></button>
    </div>
    <div class="tasks">
      <a href="#"><svg><use href="#tfolder"/></svg>水文观测</a>
      <a href="#"><svg><use href="#tfolder"/></svg>我录的视屏</a>
      <a href="#"><svg viewBox="0 0 20 16"><path fill="none" stroke="#22b43a" stroke-width="2.500" d="M1 9l6 6L19 1"/></svg>1.17 2020年卡...</a>
      <a href="#"><svg><use href="#tfolder"/></svg>软件</a>
      <a href="#"><svg viewBox="0 0 20 22"><path fill="#e9c04a" d="M0 4l6-4 4 2v17l-6 3-4-2z"/><path fill="#4fa36a" d="M5 5l5-3 3 2v16l-5 2-3-1z"/><path fill="#eee" d="M8 5l5-2v17l-5 2z"/><path fill="#d96a1c" d="M11 7l9-3v15l-9 3z"/></svg>Surpac地质建模...</a>
      <a href="#"><svg><use href="#logo"/></svg>3DMine 企业版...</a>
      <a href="#" class="active"><svg><use href="#logo"/></svg>3DMine 企业版...</a>
      <a href="#"><svg viewBox="0 0 22 22"><circle cx="10" cy="12" r="9.500" fill="#2fb544"/><path d="M9 3q4-4 7 0t4 2l-3 4-6-1z" fill="#d9f0d4" stroke="#2a8a3a"/><circle cx="12" cy="5" r="1"/><circle cx="17" cy="5" r="1"/><path d="M3 13q7 6 13-1-1 8-7 7-5-1-6-6z" fill="#0e5a1e"/></svg>青梅煮酒28</a>
    </div>
    <div class="tray">
      <svg viewBox="0 0 18 16"><path fill="none" stroke="#5fd02a" stroke-width="2" d="M1 6q8-8 16 0M4 9.500q5-5 10 0"/><circle cx="9" cy="13" r="2" fill="#5fd02a"/></svg>
      <svg viewBox="0 0 18 16"><path fill="none" stroke="#fff" stroke-width="1.500" d="M4 11l5-5 5 5"/></svg>
      <svg><use href="#ql"/></svg>
      <svg><use href="#ql"/></svg>
      <svg viewBox="0 0 18 16"><path fill="#e8f4fc" d="M1 0h16v16H1z"/><path fill="none" stroke="#2b87d0" stroke-width="2" d="M12 12q-7 3-8-3 0-6 6-5 6 2 3 7l2 3"/></svg>
      <svg viewBox="0 0 18 16"><circle cx="9" cy="8" r="8" fill="#e3c81c"/><circle cx="9" cy="8" r="5.500" fill="#3fae2f"/><path stroke="#fff" stroke-width="2" d="M9 4.500v7M5.500 8h7"/></svg>
      <svg viewBox="0 0 18 16"><path fill="none" stroke="#fff" d="M2 6h3l4-4v12l-4-4H2zM11 5q2 3 0 6M13 3q4 5 0 10"/></svg>
      <span class="lang">简体</span>
      <time>11:21<br>2020/4/17</time>
      <svg viewBox="0 0 18 16"><path fill="none" stroke="#fff" d="M4.500.5h11v15h-11zM2.500 3v12.500H5M7 4.500h6M7 7.500h6M7 10.500h6"/></svg>
      <svg class="note" viewBox="0 0 18 16"><path fill="none" stroke="#fff" stroke-width="1.200" d="M2 1h14v11h-4l-3 3v-3H2z"/></svg>
    </div>
  </footer>
</body>
</html>
```

FILE: styles.css
```css
* {
  box-sizing: border-box;
}
body {
  margin: 0;
  height: 100vh;
  display: flex;
  flex-direction: column;
  overflow: hidden;
  background: #707070;
  font: 12px/16px "Noto Sans CJK SC", sans-serif;
  color: #111;
}
h1, h2, p, ul {
  margin: 0;
  padding: 0;
  font-weight: normal;
}
button {
  margin: 0;
  padding: 0;
  border: 0;
  background: none;
  font: inherit;
  color: inherit;
}
a {
  color: inherit;
  text-decoration: none;
}
svg {
  display: block;
  flex: none;
}
.defs {
  position: absolute;
  width: 0;
  height: 0;
}

/* title and menu */
.titlebar {
  height: 23px;
  display: flex;
  align-items: center;
  background: #fff;
}
.titlebar .logo {
  width: 16px;
  height: 14px;
  margin: 0 5px 0 2px;
}
.titlebar h1 {
  font-family: "Open Sans", "Noto Sans CJK SC", sans-serif;
  font-size: 12px;
  color: #000;
}
.winbtns {
  margin-left: auto;
  display: flex;
  padding-right: 2px;
}
.winbtns button {
  width: 46px;
  display: flex;
  justify-content: center;
}
.winbtns svg {
  width: 12px;
  height: 12px;
  fill: none;
  stroke: #000;
}
.menubar {
  height: 30px;
  display: flex;
  align-items: center;
  font-size: 17px;
  color: #e4e4e4;
  font-weight: 300;
}
.menubar .doc {
  width: 16px;
  height: 14px;
  margin-right: 10px;
}
.menubar a {
  margin-right: 14px;
}
.mdibtns {
  margin-left: auto;
  display: flex;
  gap: 6px;
  padding: 8px 4px 0 0;
}
.mdibtns svg {
  width: 10px;
  height: 10px;
  fill: none;
  stroke: #d8d8d8;
}

/* toolbars */
.grip {
  width: 10px;
  height: 18px;
  flex: none;
  background: repeating-linear-gradient(#222 0 2px, transparent 2px 4px) 4px 0 / 2px 100% no-repeat;
}
.toolbars {
  height: 120px;
}
.row {
  height: 30px;
  display: flex;
}
.bar {
  height: 30px;
  display: flex;
  align-items: center;
  padding-right: 2px;
  background: linear-gradient(#bebebe, #a9a9a9 50%, #959595);
  border-bottom: 1px solid #4e4e4e;
  border-radius: 3px;
}
.bar button {
  width: 22px;
  height: 26px;
  display: flex;
  align-items: center;
  justify-content: center;
  border-radius: 3px;
}
.bar button.on {
  background: linear-gradient(#fbe9a4, #fbd75c);
  border: 1px solid #d3a025;
}
.bar svg {
  width: 20px;
  height: 16px;
}
.bar svg, .vbar svg {
  fill: none;
  stroke: #3d4558;
}
.w { fill: #f5f7fa; }
.o { stroke: #b8782a; }
.r { stroke: #d42222; stroke-width: 2; }
.bl { stroke: #2f6ca8; }
.fd { fill: #1c2644; stroke: none; }
.fo { fill: #b8682a; stroke: none; }
.fg { fill: #d69a1e; stroke: #a97412; }
.fb { fill: #1f6fb0; stroke: none; }
.t {
  font-family: "Liberation Sans", sans-serif;
  stroke: none;
}
text.t:not([fill]) {
  fill: #1c2644;
}
.sep {
  width: 2px;
  height: 18px;
  margin: 0 3px;
  background: #f2f2f2;
  border-left: 1px solid #888;
}
.combos {
  display: flex;
  gap: 4px;
  margin: 0 2px;
}
.combo {
  position: relative;
  width: 196px;
  height: 21px;
}
.combo.ltype {
  width: 246px;
}
.combo select {
  width: 100%;
  height: 100%;
  appearance: none;
  border: 1px solid #777;
  border-radius: 0;
  background: linear-gradient(to right, transparent calc(100% - 14px), #cfcfcf 0) #efefef;
  font: 11px "Liberation Sans", sans-serif;
  color: #000;
  padding: 0 16px 0 2px;
}
.combo::after {
  content: "";
  position: absolute;
  right: 4px;
  top: 9px;
  border: 3px solid transparent;
  border-top: 4px solid #777;
}
.combo i {
  position: absolute;
}
.swatch {
  border: 1px solid #000;
  background: #fff;
}
.combo .swatch {
  left: 4px;
  top: 4px;
  width: 12px;
  height: 12px;
}
.combo .line {
  left: 8px;
  top: 10px;
  width: 67px;
  border-top: 1px solid #000;
}
.combo.lwidth .line {
  width: 90px;
}
.combo.color select { padding-left: 23px; }
.combo.ltype select { padding-left: 90px; }
.combo.lwidth select { padding-left: 107px; }

/* main area */
main {
  flex: 1;
  min-height: 0;
  display: flex;
}
.rail {
  width: 26px;
  flex: none;
  padding: 44px 0 0 1px;
}
.rail.right {
  width: 27px;
  padding-left: 2px;
}
.vbar {
  width: 24px;
  display: flex;
  flex-direction: column;
  align-items: center;
  padding-bottom: 1px;
  background: linear-gradient(to right, #bebebe, #a9a9a9 50%, #959595);
  border-radius: 3px;
}
.vgrip {
  width: 16px;
  height: 10px;
  background: repeating-linear-gradient(to right, #222 0 2px, transparent 2px 4px) 0 4px / 100% 3px no-repeat;
}
.vbar button {
  width: 22px;
  height: 22px;
  display: flex;
  align-items: center;
  justify-content: center;
}
.vbar svg {
  width: 16px;
  height: 16px;
}
.vsep {
  width: 14px;
  height: 2px;
  margin: 3px 0;
  background: #f2f2f2;
  border-top: 1px solid #888;
}
.work {
  flex: 1;
  min-width: 0;
  display: flex;
  flex-direction: column;
}
.upper {
  flex: 1;
  min-height: 0;
  display: flex;
}
.side {
  width: 280px;
  flex: none;
  display: flex;
  flex-direction: column;
  gap: 5px;
}
.center {
  flex: 1;
  min-width: 0;
  display: flex;
  flex-direction: column;
}
.stage {
  flex: 1;
  min-height: 0;
  display: flex;
  gap: 4px;
  padding-left: 4px;
}

/* docked panels */
.panel {
  display: flex;
  flex-direction: column;
  min-height: 0;
}
.panel header {
  height: 27px;
  flex: none;
  display: flex;
  align-items: center;
  gap: 9px;
  padding: 0 6px 0 4px;
  background: #7b7b7b;
  color: #f4f4f4;
}
.panel h2 {
  flex: 1;
  font-size: 17px;
  font-weight: 300;
}
.panel .pin {
  width: 8px;
  height: 10px;
}
.panel .close {
  width: 8px;
  height: 8px;
}
.panel .body {
  flex: 1;
  min-height: 0;
  background: #efefef;
}
.files {
  flex: 0 0 50%;
}
.files header {
  height: 28px;
}
.layers {
  flex: 1;
}
.layers .body {
  margin-bottom: 1px;
}
.scroller {
  display: grid;
  grid-template: 1fr 17px / 1fr 17px;
}
.scroller .tree {
  overflow: hidden;
}
.vscroll, .hscroll {
  display: flex;
  align-items: center;
  background: #efefef;
}
.vscroll {
  flex-direction: column;
  padding: 7px 2px 6px 0;
}
.vscroll .thumb {
  width: 15px;
  height: 58px;
  margin: 5px 0 auto;
}
.hscroll {
  padding: 0 8px 0 7px;
}
.hscroll .thumb {
  width: 121px;
  height: 15px;
  margin: 0 auto 0 5px;
}
.thumb {
  background: #cdcdcd;
}
.vscroll svg {
  width: 8px;
  height: 6px;
}
.hscroll svg {
  width: 6px;
  height: 8px;
}
.vscroll svg, .hscroll svg {
  fill: none;
  stroke: #505050;
  stroke-width: 2;
}

/* trees */
.tree, .tree ul {
  list-style: none;
  position: relative;
}
.tree ul {
  margin-left: 19px;
}
.tree::before, .tree ul::before {
  content: "";
  position: absolute;
  left: 9px;
  top: 10px;
  bottom: 0;
  border-left: 1px dotted #777;
}
.tree ul::before {
  top: -2px;
}
.tree ul.end::before {
  bottom: 10px;
}
.node {
  position: relative;
  height: 20px;
  display: flex;
  align-items: center;
  gap: 4px;
  white-space: nowrap;
  color: #000;
}
.node svg {
  width: 16px;
  height: 14px;
}
.node svg.tall {
  height: 16px;
}
.twig {
  position: relative;
  width: 17px;
  height: 20px;
  display: flex;
  align-items: center;
  padding-left: 5px;
}
.twig::before {
  content: "";
  position: absolute;
  left: 10px;
  right: -3px;
  top: 10px;
  border-top: 1px dotted #777;
}
.exp {
  position: relative;
  width: 9px;
  height: 9px;
  border: 1px solid #777;
  background: linear-gradient(#000, #000) 1px 3px / 5px 1px no-repeat, linear-gradient(#000, #000) 3px 1px / 1px 5px no-repeat, #fff;
}
.exp.minus {
  background: linear-gradient(#000, #000) 1px 3px / 5px 1px no-repeat, #fff;
}
.wide::before {
  bottom: 12px;
}
.wide .node {
  height: 23px;
  gap: 6px;
}
.wide .twig {
  width: 24px;
}
.wide .node svg {
  width: 14px;
  height: 10px;
}

/* 3D view */
.viewport {
  position: relative;
  flex: 1;
  min-width: 0;
  background: #fff;
  overflow: hidden;
}
.model {
  position: absolute;
  left: 270px;
  top: 147px;
  width: 680px;
  height: 430px;
}
.ticker {
  position: absolute;
  left: 358px;
  top: 280px;
  width: 500px;
  height: 17px;
  padding-bottom: 2px;
  overflow: hidden;
  display: flex;
  align-items: center;
  white-space: nowrap;
  font-size: 19px;
  font-weight: 300;
  color: #dfe69a;
  background: linear-gradient(rgba(90, 150, 60, .2), rgba(70, 140, 90, .5) 50%, rgba(20, 115, 160, .9));
  mask-image: linear-gradient(to right, #000 35%, transparent);
}
.axes {
  position: absolute;
  right: 36px;
  top: 5px;
  width: 50px;
  height: 62px;
  font: 14px "Liberation Sans", sans-serif;
}

/* properties */
.props {
  width: 348px;
  flex: none;
}
.grid {
  flex: 1;
  display: flex;
  flex-direction: column;
  border: 1px solid #f4f4f4;
  border-bottom: 0;
}
.props table {
  width: 100%;
  border-collapse: collapse;
  table-layout: fixed;
  background: #efefef;
}
.gutcol {
  width: 16px;
}
.namecol {
  width: 158px;
}
.props th, .props td {
  height: 16px;
  padding: 0 0 0 3px;
  text-align: left;
  font-weight: normal;
  line-height: 14px;
  border-bottom: 1px solid #707070;
  color: #000;
}
.props tbody th {
  border-right: 1px solid #707070;
}
.props thead th {
  background: #707070;
  font-size: 13px;
  font-weight: bold;
  padding-left: 4px;
}
.props td.gut {
  background: #707070;
}
.props .exp {
  display: block;
}
.val {
  display: flex;
  align-items: center;
  font: 10px/14px "Liberation Mono", monospace;
}
.val.num {
  padding-left: 2px;
}
.val .swatch {
  width: 16px;
  height: 8px;
  margin: 0 6px 0 1px;
}
.val .line {
  width: 56px;
  margin: 0 9px 0 3px;
  border-top: 1px solid #000;
}
.val .line.long {
  width: 62px;
  margin-right: 3px;
}
.blank {
  flex: 1;
  background: linear-gradient(#707070, #707070) 173px 0 / 1px 100% no-repeat #efefef;
}
.desc {
  height: 53px;
  flex: none;
  margin-top: 4px;
  border: 1px solid #e8e8e8;
  outline: 1px solid #333;
  outline-offset: -2px;
}

/* message panel */
.info {
  height: 169px;
  flex: none;
  margin-top: 5px;
  display: flex;
}
.info h2 {
  width: 30px;
  padding: 8px 6px 0 0;
  writing-mode: vertical-rl;
  text-orientation: sideways;
  font-size: 12px;
  line-height: 16px;
  color: #f0f0f0;
}
.console {
  flex: 1;
  min-width: 0;
  display: flex;
  flex-direction: column;
  border-left: 1px solid #999;
}
.log {
  flex: 1;
  display: flex;
  justify-content: space-between;
  background: #d2d2d2;
}
.lines {
  padding-top: 1px;
  font-family: Inter, "Noto Sans CJK SC", sans-serif;
}
.log .vscroll {
  padding: 7px 0 6px;
  margin-right: 2px;
  border-left: 1px solid #fff;
}
.log .vscroll .thumb {
  height: 92px;
  margin-top: 16px;
}
.prompt {
  height: 31px;
  flex: none;
  display: flex;
  align-items: center;
  gap: 4px;
  padding-left: 4px;
  background: #fff;
  border: 1px solid #999;
}
.prompt svg {
  width: 24px;
  height: 14px;
}
.prompt input {
  flex: 1;
  height: 24px;
  border: 0;
  outline: 0;
  background: none;
}

/* tabs and status */
.lower {
  height: 27px;
  flex: none;
  display: flex;
  background: #e4e4e4;
}
.tabs {
  width: 308px;
  flex: none;
  display: flex;
  gap: 6px;
  padding: 0 0 6px 5px;
  background: #aeaeae;
}
.tabs button {
  width: 70px;
  height: 21px;
  padding-bottom: 8px;
  font-size: 13px;
  line-height: 13px;
  background: #d2d2d2;
  clip-path: polygon(0 0, 100% 0, 94% 14%, 86% 88%, 82% 100%, 18% 100%, 14% 88%, 6% 14%);
}
.tabs button.current {
  width: 57px;
  background: #fafafa;
}
.tabs button.add {
  width: 22px;
  height: 15px;
  margin-top: 3px;
  padding: 3px 6px;
  clip-path: polygon(18% 0, 100% 0, 82% 100%, 0 100%);
}
.tabs svg {
  width: 9px;
  height: 9px;
  stroke: #444;
  stroke-width: 2;
}
.status {
  flex: 1;
  display: flex;
  align-items: center;
  gap: 6px;
  padding: 0 0 2px 12px;
}
.coords {
  width: 204px;
  white-space: nowrap;
  font-family: "Open Sans", sans-serif;
  font-size: 11px;
}
.status button {
  width: 40px;
  height: 23px;
  font-size: 14px;
  line-height: 20px;
  border: 1px solid;
  border-color: #f4f4f4 #999 #999 #f4f4f4;
}
.status button.one {
  width: 36px;
}
.status button.down {
  border-color: #111 #fff #fff #111;
}

/* input method box floating over the window */
.ime {
  position: absolute;
  right: 0;
  bottom: 135px;
  width: 104px;
  height: 39px;
  padding: 0 4px;
  background: linear-gradient(#006a00, #005000);
  border-radius: 3px;
  color: #fff;
  white-space: nowrap;
}
.ime div {
  display: flex;
  align-items: center;
  gap: 4px;
  height: 19px;
}
.ime .line1 span {
  padding: 0 1px;
  line-height: 17px;
  border: 1px solid #003a00;
  background: #0a8a14;
}
.ime .line2 {
  padding-left: 2px;
}
.ime b {
  font-weight: normal;
}
.ime svg {
  width: 10px;
  height: 10px;
  fill: none;
  stroke: #fff;
}
.ime .line2 svg {
  width: 14px;
  height: 12px;
}
.ime .solid {
  fill: #fff;
  stroke: none;
}
.ime .line2 .kbd {
  width: 18px;
  margin-left: 2px;
  stroke: #3fae3f;
}

/* taskbar */
.taskbar {
  height: 40px;
  flex: none;
  display: flex;
  background: #030608;
  color: #fff;
}
.launch {
  display: flex;
  width: 389px;
  flex: none;
}
.launch button {
  width: 48px;
  display: flex;
  align-items: center;
  justify-content: center;
}
.launch svg {
  width: 18px;
  height: 16px;
}
.launch svg.big {
  width: 23px;
  height: 22px;
}
.tasks {
  display: flex;
  gap: 8px;
}
.tasks a {
  width: 136px;
  display: flex;
  align-items: center;
  gap: 6px;
  padding-left: 4px;
  border-bottom: 2px solid #76b0e8;
  white-space: nowrap;
  font-size: 12px;
}
.tasks a.active {
  background: #34383c;
}
.tasks svg {
  width: 22px;
  height: 20px;
}
.tray {
  margin-left: auto;
  display: flex;
  align-items: center;
  gap: 7px;
  padding-right: 24px;
  font-size: 12px;
}
.tray svg {
  width: 18px;
  height: 16px;
}
.tray time {
  width: 70px;
  margin-right: 8px;
  text-align: center;
  font-size: 13px;
  line-height: 19px;
}
.tray .note {
  margin-left: 15px;
}
```
